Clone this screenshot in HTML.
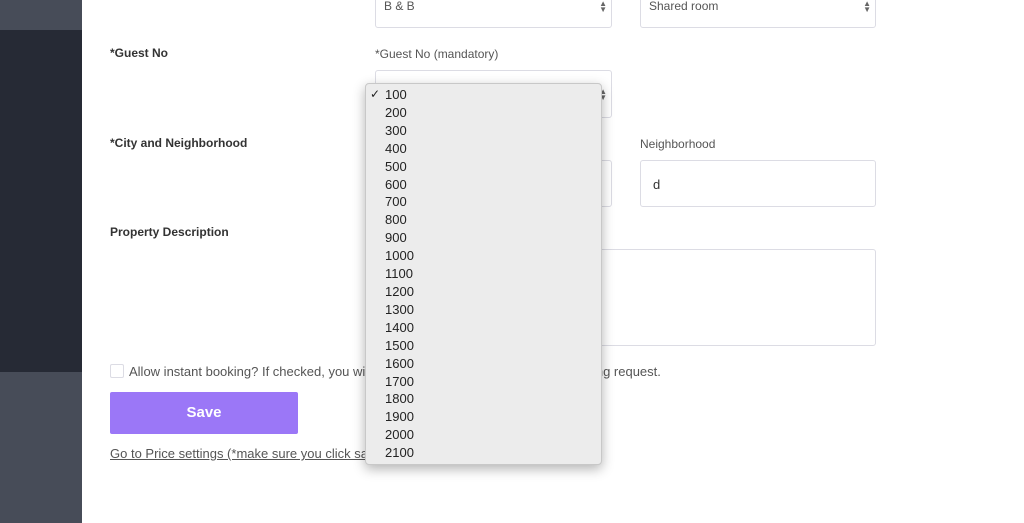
<!DOCTYPE html>
<html><head><style>
body{margin:0;width:1024px;height:523px;position:relative;overflow:hidden;background:#fff;font-family:"Liberation Sans",sans-serif;}
.a{position:absolute}
.lbl{font-size:12px;font-weight:bold;color:#333}
.box{position:absolute;border:1px solid #dcdce4;border-radius:3px;background:#fff;box-sizing:border-box}
.sm{font-size:12px;color:#555}
.arr{position:absolute;right:4px;font-size:8px;color:#666;line-height:6px}
</style></head><body>
<div class="a" style="left:0;top:0;width:82px;height:30px;background:#474c58"></div>
<div class="a" style="left:0;top:30px;width:82px;height:342px;background:#262a35"></div>
<div class="a" style="left:0;top:372px;width:82px;height:151px;background:#474c58"></div>

<div class="box" style="left:375px;top:-20px;width:237px;height:48px"><span class="a sm" style="left:8px;top:18px">B &amp; B</span><div class="arr" style="top:20px">▲<br>▼</div></div>
<div class="box" style="left:640px;top:-20px;width:236px;height:48px"><span class="a sm" style="left:8px;top:18px">Shared room</span><div class="arr" style="top:20px">▲<br>▼</div></div>

<div class="a lbl" style="left:110px;top:46px">*Guest No</div>
<div class="a sm" style="left:375px;top:47px">*Guest No (mandatory)</div>
<div class="box" style="left:375px;top:70px;width:237px;height:48px"><div class="arr" style="top:18px">▲<br>▼</div></div>

<div class="a lbl" style="left:110px;top:136px">*City and Neighborhood</div>
<div class="a sm" style="left:640px;top:137px">Neighborhood</div>
<div class="box" style="left:375px;top:160px;width:237px;height:47px"></div>
<div class="box" style="left:640px;top:160px;width:236px;height:47px"><span class="a" style="left:12px;top:16px;font-size:13px;color:#333">d</span></div>

<div class="a lbl" style="left:110px;top:225px">Property Description</div>
<div class="box" style="left:375px;top:249px;width:501px;height:97px"></div>

<div class="box" style="left:110px;top:364px;width:14px;height:14px;border-radius:2px"></div>
<div class="a" style="left:129px;top:364px;color:#555;font-size:13px">Allow instant booking? If checked, you will not need to approve or decline a booking request.</div>

<div class="a" style="left:110px;top:392px;width:188px;height:42px;background:#9b77f7;border-radius:2px;color:#fff;font-weight:bold;font-size:15px;text-align:center;line-height:42px">Save</div>
<div class="a" style="left:110px;top:446px;text-decoration:underline;color:#555;font-size:13px">Go to Price settings (*make sure you click save first)</div>

<div class="a" style="left:365px;top:83px;width:237px;height:382px;background:#ececec;border:1px solid #c8c8c8;border-radius:4px;box-shadow:0 4px 12px rgba(0,0,0,.3);box-sizing:border-box;font-size:13px;color:#222">
<div style="position:absolute;left:4px;top:3px;font-size:12px">✓</div>
<div style="position:absolute;left:19px;top:2px;line-height:17.9px">100<br>200<br>300<br>400<br>500<br>600<br>700<br>800<br>900<br>1000<br>1100<br>1200<br>1300<br>1400<br>1500<br>1600<br>1700<br>1800<br>1900<br>2000<br>2100</div>
</div>
</body></html>
